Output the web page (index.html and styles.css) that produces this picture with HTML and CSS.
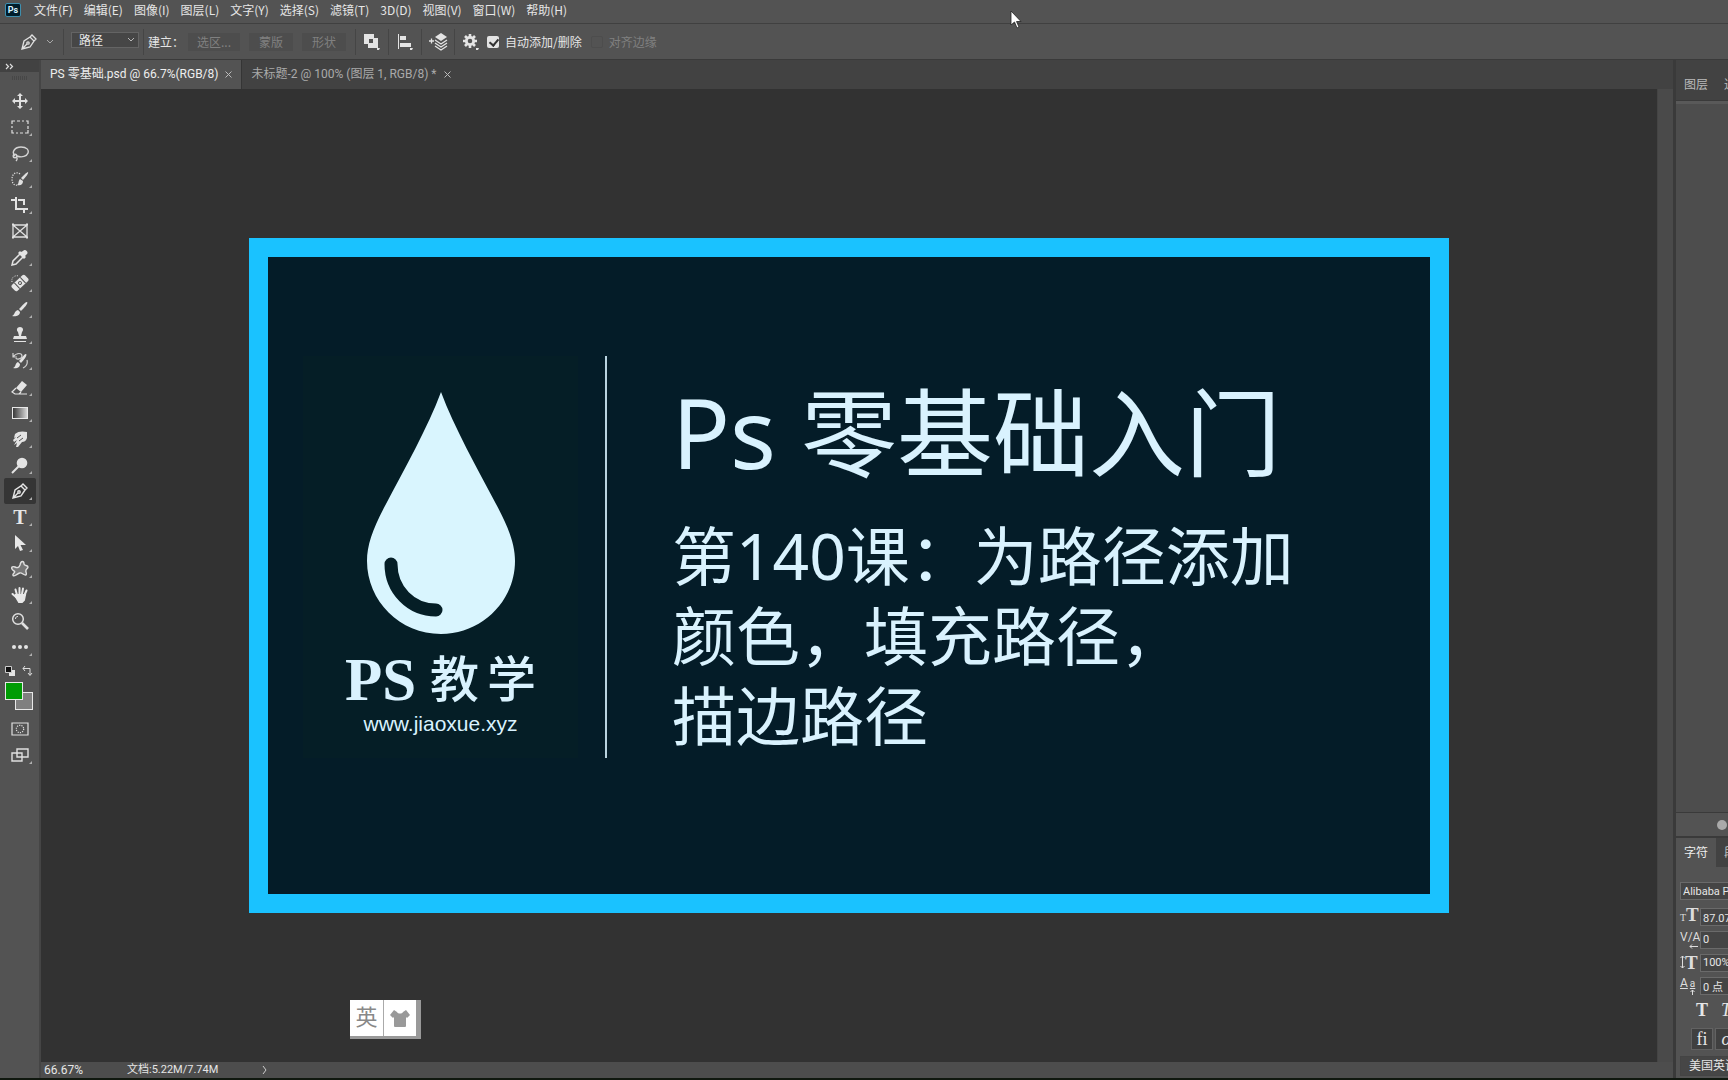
FILE: index.html
```html
<!DOCTYPE html>
<html lang="zh-CN">
<head>
  <meta charset="UTF-8">
  <meta name="viewport" content="width=device-width, initial-scale=1.0">
  <title>PS 零基础.psd</title>
  <link rel="stylesheet" href="styles.css">
</head>
<body>

  <nav class="menubar">
    <span class="app-logo">Ps</span>
    <button>文件(F)</button>
    <button>编辑(E)</button>
    <button>图像(I)</button>
    <button>图层(L)</button>
    <button>文字(Y)</button>
    <button>选择(S)</button>
    <button>滤镜(T)</button>
    <button>3D(D)</button>
    <button>视图(V)</button>
    <button>窗口(W)</button>
    <button>帮助(H)</button>
  </nav>

  <div class="options">
    <button class="preset" aria-label="钢笔工具预设">
      <svg width="18" height="18" viewBox="0 0 18 18" fill="none" stroke="#e0e0e0" stroke-width="1.3"><path d="M2 16l2-8 6-4 4 4-4 6z M2 16l5-5 M10 4l2-2 4 4-2 2"/><circle cx="8" cy="10" r="1.2"/></svg>
      <svg width="8" height="6" viewBox="0 0 8 6" fill="none" stroke="#a8a8a8"><path d="M1 1l3 3 3-3"/></svg>
    </button>
    <i class="sep"></i>
    <div class="mode">
      <select aria-label="工具模式"><option>路径</option><option>形状</option></select>
      <svg width="8" height="6" viewBox="0 0 8 6" fill="none" stroke="#b8b8b8"><path d="M1 1l3 3 3-3"/></svg>
    </div>
    <i class="sep"></i>
    <span class="label">建立：</span>
    <button class="make" disabled>选区...</button>
    <button class="make" disabled>蒙版</button>
    <button class="make" disabled>形状</button>
    <i class="sep"></i>
    <div class="path-ops">
      <button aria-label="路径操作"><svg width="18" height="18" viewBox="0 0 18 18"><path fill="#e4e4e4" fill-rule="evenodd" d="M1 1h10v4h4v10H5v-4H1z M6 6v4h4V6z"/><path fill="#e4e4e4" d="M14 15h3l-1 2h-2z"/></svg></button>
      <i class="sep"></i>
      <button aria-label="路径对齐"><svg width="18" height="18" viewBox="0 0 18 18" fill="#e4e4e4"><path d="M2 1h1v15H2z M4 3h6v4H4z M4 10h11v4H4z M14 15h3l-1 2h-2z"/></svg></button>
      <i class="sep"></i>
      <button aria-label="路径排列"><svg width="20" height="20" viewBox="0 0 20 20"><path fill="#e4e4e4" d="M7 5l6-4 6 4-6 4z"/><path fill="none" stroke="#e4e4e4" stroke-width="1.3" d="M7 8l6 4 6-4 M7 11l6 4 6-4 M7 14l6 4 6-4 M1 9h5 M3.500 6.500v5"/></svg></button>
      <i class="sep"></i>
      <button aria-label="设置"><svg width="18" height="18" viewBox="0 0 18 18"><circle cx="8" cy="8" r="3.700" fill="none" stroke="#e4e4e4" stroke-width="2.800"/><path stroke="#e4e4e4" stroke-width="2.600" d="M8 1v3 M8 12v3 M1 8h3 M12 8h3 M3 3l2 2 M11 11l2 2 M13 3l-2 2 M5 11l-2 2"/><path fill="#e4e4e4" d="M14 15h3l-1 2h-2z"/></svg></button>
    </div>
    <label class="check"><input type="checkbox" checked>自动添加/删除</label>
    <label class="check off"><input type="checkbox" disabled>对齐边缘</label>
  </div>

  <div class="workspace">
    <aside class="tools">
      <button class="expand" aria-label="展开面板"><svg width="9" height="7" viewBox="0 0 9 7" fill="none" stroke="#ddd" stroke-width="1.200"><path d="M1 1l2.500 2.500L1 6 M5 1l2.500 2.500L5 6"/></svg></button>
      <div class="grip"></div>
      <button class="tool more" aria-label="移动工具"><svg viewBox="0 0 18 18" fill="#e0e0e0"><path d="M9 1l3 3h-2v4h4V6l3 3-3 3v-2h-4v4h2l-3 3-3-3h2v-4H4v2L1 9l3-3v2h4V4H6z"/></svg></button>
      <button class="tool more" aria-label="矩形选框工具"><svg viewBox="0 0 18 18" fill="none" stroke="#e0e0e0" stroke-width="1.200"><path d="M1 6V3h3 M6 3h3 M11 3h2 M15 3h2v3 M17 8v3 M17 12v3h-3 M12 15H9 M7 15H5 M3 15H1v-3 M1 10V8"/></svg></button>
      <button class="tool more" aria-label="套索工具"><svg viewBox="0 0 18 18" fill="none" stroke="#d4d4d4" stroke-width="1.400"><path d="M4 12C0 8 4 3 10 3s8 3 7 6-6 5-11 3"/><circle cx="4" cy="12" r="1.800"/><path d="M5 13c2 1 1 3 0 4"/></svg></button>
      <button class="tool more" aria-label="快速选择工具"><svg viewBox="0 0 18 18"><path fill="none" stroke="#e0e0e0" stroke-width="1.200" stroke-dasharray="1.200 1.300" d="M9 4C5 1 1 4 1 9s3 7 6 6"/><path fill="#e0e0e0" d="M17 2c1 1-3 6-5 8l-2-2c2-2 6-6 7-6z M9 9l3 2c0 4-3 5-6 4 2-1 1-4 3-6z"/></svg></button>
      <button class="tool more" aria-label="裁剪工具"><svg viewBox="0 0 18 18" fill="none" stroke="#e4e4e4" stroke-width="2"><path d="M5 1v12h12 M0 4h4 M7 4h6v5 M13 12v5"/></svg></button>
      <button class="tool" aria-label="图框工具"><svg viewBox="0 0 18 18" fill="none" stroke="#e0e0e0" stroke-width="1.300"><path d="M2 3h14v12H2z M2 3l14 12 M16 3L2 15"/><path stroke-width="2" d="M1 2.500h2 M15 2.500h2 M1 15.500h2 M15 15.500h2"/></svg></button>
      <button class="tool more" aria-label="吸管工具"><svg viewBox="0 0 18 18"><path fill="#e4e4e4" d="M12 3c2-3 6 1 4 3l-2 2 1 1-2 2-6-6 2-2 1 1z"/><path fill="none" stroke="#e4e4e4" stroke-width="1.500" d="M9 6l-7 7-1 4 4-1 7-7"/></svg></button>
      <button class="tool more" aria-label="修复画笔工具"><svg viewBox="0 0 18 18"><g transform="rotate(-43 9 9)"><rect x="0" y="5" width="18" height="8" rx="2" fill="#e4e4e4"/><path stroke="#535353" d="M5 5v8 M13 5v8"/><circle cx="9" cy="9" r="2" fill="#535353"/><circle cx="9" cy="9" r="1" fill="#e4e4e4"/></g><path fill="none" stroke="#e0e0e0" stroke-dasharray="1 1.300" d="M1 8C0 3 4 1 8 2"/></svg></button>
      <button class="tool more" aria-label="画笔工具"><svg viewBox="0 0 18 18" fill="#e4e4e4"><path d="M16 2c2 1-4 7-6 9l-2-2c2-2 7-8 8-7z M7 10l2 2c0 4-5 5-8 4 3-1 2-5 6-6z"/></svg></button>
      <button class="tool more" aria-label="仿制图章工具"><svg viewBox="0 0 18 18" fill="#e4e4e4"><path d="M9 1c3 0 4 3 2 5l-1 4h5l1 3H2l1-3h5L7 6C5 4 6 1 9 1z M3 15h12v1H3z"/></svg></button>
      <button class="tool more" aria-label="历史记录画笔工具"><svg viewBox="0 0 18 18"><path fill="#e4e4e4" d="M15 2c2 1-3 7-5 9L8 9c2-2 6-8 7-7z M7 10l2 2c0 4-4 5-7 4 3-1 2-5 5-6z"/><path fill="none" stroke="#d0d0d0" stroke-width="1.200" d="M2 1v4h4 M2 5c4-5 9-4 9-1s-6 4-6 2 M16 8c1 4 0 6-4 8"/></svg></button>
      <button class="tool more" aria-label="橡皮擦工具"><svg viewBox="0 0 18 18"><path fill="#e4e4e4" d="M11 3l5 4-6 7-5-4z"/><path fill="none" stroke="#e4e4e4" stroke-width="1.200" d="M5 10l-4 4 3 2h4l2-2 M4 16h12"/></svg></button>
      <button class="tool more" aria-label="渐变工具"><svg viewBox="0 0 18 18"><defs><linearGradient id="grad"><stop offset="0" stop-color="#333"/><stop offset="1" stop-color="#ddd"/></linearGradient></defs><rect x="1.500" y="3.500" width="15" height="11" fill="url(#grad)" stroke="#e8e8e8"/></svg></button>
      <button class="tool more" aria-label="涂抹工具"><svg viewBox="0 0 18 18" fill="#e4e4e4"><path d="M4 4c3-3 8-3 12-2v6c-1 3-3 4-5 4l-4 5H5l1-4-3 2 3-5-3 2-1-2 3-3-2 1z"/><path d="M6 8l4-3 M8 11l4-3" stroke="#535353"/></svg></button>
      <button class="tool more" aria-label="减淡工具"><svg viewBox="0 0 18 18"><circle cx="11" cy="7" r="5.300" fill="#e4e4e4"/><path stroke="#e4e4e4" stroke-width="2" d="M8 10l-7 7"/></svg></button>
      <button class="tool more active" aria-label="钢笔工具"><svg viewBox="0 0 18 18" fill="none" stroke="#e4e4e4" stroke-width="1.400"><path d="M2 16l2-8 6-4 4 4-4 6z M2 16l5-5 M10 4l2-2 4 4-2 2"/><circle cx="8" cy="10" r="1.200"/></svg></button>
      <button class="tool more type" aria-label="文字工具">T</button>
      <button class="tool more" aria-label="路径选择工具"><svg viewBox="0 0 18 18" fill="#e8e8e8"><path d="M4 1l11 10H9.500l2.500 5-3 1-2-5-3 3z"/></svg></button>
      <button class="tool more" aria-label="自定形状工具"><svg viewBox="0 0 18 18" fill="#777" stroke="#e0e0e0" stroke-width="1.400"><path d="M9 5c1-5 4-4 4-1 0 2 4 1 4 3s-3 2-2 5 0 4-3 2-4-1-7 1-4 0-2-2-1-2-2-4 1-3 3-2 4 1 5-2z"/></svg></button>
      <button class="tool more" aria-label="抓手工具"><svg viewBox="0 0 18 18" fill="none" stroke="#e8e8e8" stroke-width="2" stroke-linecap="round"><path d="M6 9L4.500 3.500 M8.500 8V2 M11 8l1-5.500 M13.500 9l2-4.500 M5 11L1.500 8"/><path fill="#e8e8e8" d="M5 9h9l-1 5-2 2H8l-3-5z"/></svg></button>
      <button class="tool" aria-label="缩放工具"><svg viewBox="0 0 18 18" fill="none" stroke="#e0e0e0"><circle cx="7" cy="7" r="5.300" stroke-width="1.500"/><path d="M4.500 7c0-2 1-2.500 2.500-2.500"/><path stroke-width="2.600" d="M11 11l6 6"/></svg></button>
      <button class="tool more" aria-label="编辑工具栏"><svg viewBox="0 0 18 18" fill="#e4e4e4"><circle cx="3" cy="9" r="2"/><circle cx="9" cy="9" r="2"/><circle cx="15" cy="9" r="2"/></svg></button>
      <div class="color-mini">
        <button aria-label="默认颜色"><svg width="10" height="10" viewBox="0 0 10 10"><path fill="#e4e4e4" d="M4 4h6v6H4z"/><path fill="#111" stroke="#ccc" d="M.5.5h6v6h-6z"/></svg></button>
        <button aria-label="切换颜色"><svg width="11" height="10" viewBox="0 0 11 10" fill="none" stroke="#ddd"><path d="M3 0L1 2.500 3 5 M1 2.500h7V9 M6 7l2 2.500L10 7"/></svg></button>
      </div>
      <div class="swatches">
        <button class="swatch back" aria-label="背景色"></button>
        <button class="swatch front" aria-label="前景色"></button>
      </div>
      <button class="tool" aria-label="快速蒙版"><svg viewBox="0 0 18 18" fill="none" stroke="#e0e0e0" stroke-width="1.200"><path d="M1 3h16v12H1z"/><circle cx="9" cy="9" r="3.700" stroke-dasharray="1.200 1.100"/></svg></button>
      <button class="tool more" aria-label="屏幕模式"><svg viewBox="0 0 18 18" fill="#535353" stroke="#e0e0e0" stroke-width="1.400"><path d="M1 7h10v8H1z M6 3h11v8H6z"/></svg></button>
    </aside>

    <main class="document">
      <div class="tabs">
        <div class="tab current"><a href="#">PS 零基础.psd @ 66.7%(RGB/8)</a><button aria-label="关闭"><svg width="7" height="7" viewBox="0 0 7 7" stroke="#bbb"><path d="M.5.5l6 6 M6.500.5l-6 6"/></svg></button></div>
        <div class="tab"><a href="#">未标题-2 @ 100% (图层 1, RGB/8) *</a><button aria-label="关闭"><svg width="7" height="7" viewBox="0 0 7 7" stroke="#bbb"><path d="M.5.5l6 6 M6.500.5l-6 6"/></svg></button></div>
      </div>

      <div class="stage">
        <div class="canvas">
          <div class="artboard">
            <div class="brand">
              <svg class="drop" width="150" height="242" viewBox="0 0 150 242">
                <path fill="#d9f5fe" d="M75 0C88 35 111 76 130 112C143 136 149 153 149 169C149 209 116 242 75 242C34 242 1 209 1 169C1 153 7 136 20 112C39 76 62 35 75 0z"/>
                <path fill="none" stroke="#051e26" stroke-width="13" stroke-linecap="round" d="M25 172c0 26 20 46 45 46"/>
              </svg>
              <div class="brand-name"><b>PS</b><span>教</span><span>学</span></div>
              <div class="brand-url">www.jiaoxue.xyz</div>
            </div>
            <div class="rule"></div>
            <div class="lesson">
              <h1>Ps 零基础入门</h1>
              <p>第140课：为路径添加<br>颜色，填充路径，<br>描边路径</p>
            </div>
          </div>
          <div class="ime"><span>英</span><span><svg width="20" height="19" viewBox="0 0 20 19" fill="#999"><path d="M4 1l3 2c1 2 5 2 6 0l3-2 4 5-3 3-1-1v9q0 1-1 1H5q-1 0-1-1V8L3 9 0 6z"/></svg></span></div>
        </div>
        <div class="scroll-y"></div>
      </div>

      <footer class="status">
        <span class="zoom">66.67%</span>
        <span class="doc">文档:5.22M/7.74M</span>
        <button aria-label="状态选项"><svg width="5" height="10" viewBox="0 0 5 10" fill="none" stroke="#ccc"><path d="M1 1l3 4-3 4"/></svg></button>
      </footer>
    </main>

    <aside class="panels">
      <div class="panel-tabs"><button>图层</button><button>通道</button></div>
      <div class="layers"></div>
      <div class="layers-foot"><i class="dot"></i></div>
      <div class="panel-tabs char-tabs"><button class="current">字符</button><button>段落</button></div>
      <div class="character">
        <input class="font" aria-label="字体" value="Alibaba PuHuiTi">
        <label class="field"><span class="glyph"><small>T</small><b>T</b></span><input value="87.07 点"></label>
        <label class="field"><span class="glyph sans kern">V/A<svg width="9" height="5" viewBox="0 0 9 5" fill="none" stroke="#ddd"><path d="M9 2.500H1 M3 .5l-2 2 2 2"/></svg></span><input value="0"></label>
        <label class="field"><span class="glyph"><svg width="5" height="14" viewBox="0 0 5 14" fill="none" stroke="#ddd"><path d="M2.500 1v12 M.5 3l2-2 2 2 M.5 11l2 2 2-2"/></svg><b>T</b></span><input value="100%"></label>
        <label class="field"><span class="glyph sans"><u>A</u><span class="shift"><u>a</u><svg width="5" height="6" viewBox="0 0 5 6" fill="none" stroke="#ddd"><path d="M2.500 1v5 M.5 3l2-2 2 2"/></svg></span></span><input value="0 点"></label>
        <div class="styles"><button><b>T</b></button><button><i>T</i></button></div>
        <div class="ligatures"><button>fi</button><button><i>o</i></button></div>
        <select class="lang" aria-label="语言"><option>美国英语</option></select>
      </div>
    </aside>
  </div>

  <svg class="pointer" width="12" height="19" viewBox="0 0 12 19"><path fill="#fff" stroke="#222" stroke-width=".8" d="M1 1v14l3.500-3 2.500 6 2-1-2.500-5.500H11z"/></svg>

</body>
</html>
```

FILE: styles.css
```css
* {
  box-sizing: border-box;
}

body {
  margin: 0;
  height: 100vh;
  display: flex;
  flex-direction: column;
  overflow: hidden;
  background: #535353;
  border-bottom: 2px solid #10180f;
  color: #e6e6e6;
  font: 12px/16px Roboto, "Noto Sans CJK SC", sans-serif;
  white-space: nowrap;
}

button,
input,
select {
  margin: 0;
  padding: 0;
  border: 0;
  background: none;
  color: inherit;
  font: inherit;
}

button {
  display: flex;
  align-items: center;
  justify-content: center;
}

a {
  color: inherit;
  text-decoration: none;
}

/* menu bar */
.menubar {
  flex: none;
  height: 24px;
  padding: 0 5px 3px;
  display: flex;
  align-items: center;
  gap: 11px;
  border-bottom: 1px solid #404040;
}

.menubar button,
.options {
  font-family: "Noto Sans CJK SC", sans-serif;
}

.app-logo {
  width: 16px;
  height: 14px;
  margin-right: 2px;
  border: 1px solid #3f8fae;
  border-radius: 2px;
  background: #001d2b;
  color: #d8f3ff;
  font-size: 9px;
  font-weight: bold;
  line-height: 12px;
  text-align: center;
}

/* options bar */
.options {
  flex: none;
  height: 36px;
  padding: 0 20px;
  display: flex;
  align-items: center;
  border-bottom: 1px solid #3a3a3a;
}

.sep {
  width: 1px;
  height: 26px;
  background: #454545;
}

.preset {
  width: 43px;
  gap: 8px;
  justify-content: flex-start;
}

.mode {
  display: grid;
  align-items: center;
  width: 68px;
  height: 16px;
  margin: 0 4px 4px 7px;
  border: 1px solid #646464;
  background: #464646;
}

.mode select,
.mode svg {
  grid-area: 1 / 1;
}

.mode select {
  height: 14px;
  padding-left: 7px;
  line-height: 14px;
  appearance: none;
}

.mode svg {
  justify-self: end;
  margin-right: 3px;
  pointer-events: none;
}

.label {
  width: 40px;
  margin-left: 4px;
}

.make {
  width: 44px;
  height: 18px;
  margin-right: 9px;
  background: #4d4d4d;
  color: #808080;
}

.label + .make {
  width: 52px;
}

.path-ops {
  display: flex;
  align-items: center;
}

.path-ops button {
  width: 32px;
}

.check {
  display: flex;
  align-items: center;
  gap: 6px;
  margin-right: 9px;
}

.check input {
  appearance: none;
  width: 12px;
  height: 12px;
  border-radius: 2px;
}

.check input:checked {
  background: #e4e4e4;
}

.check input:checked::after {
  content: "";
  display: block;
  width: 4px;
  height: 7px;
  margin: 1px 4px;
  border: solid #333;
  border-width: 0 2px 2px 0;
  transform: rotate(40deg);
}

.check.off {
  color: #808080;
}

.check.off input {
  border: 1px solid #4d4d4d;
}

/* tools */
.workspace {
  flex: 1;
  min-height: 0;
  display: flex;
}

.tools {
  flex: none;
  width: 41px;
  border-right: 2px solid #454545;
}

.expand {
  width: 100%;
  height: 12px;
  padding-left: 5px;
  justify-content: flex-start;
  background: #424242;
}

.grip {
  width: 16px;
  height: 4px;
  margin: 4px auto 8px 12px;
  background: repeating-linear-gradient(90deg, #474747 0 1px, transparent 1px 2px);
}

.tool {
  position: relative;
  width: 32px;
  height: 26px;
  margin-left: 4px;
  border-radius: 2px;
}

.tool svg {
  width: 18px;
  height: 18px;
}

.tool.more::after {
  content: "";
  position: absolute;
  right: 4px;
  bottom: 4px;
  border-left: 3px solid transparent;
  border-bottom: 3px solid #b0b0b0;
}

.tool.active {
  background: #353535;
}

.type {
  font: bold 20px/20px "Liberation Serif", serif;
}

.color-mini {
  height: 18px;
  padding: 3px 6px 0 5px;
  display: flex;
  align-items: center;
  justify-content: space-between;
}

.swatches {
  display: grid;
  width: 28px;
  height: 28px;
  margin: 4px 0 6px 5px;
}

.swatch {
  grid-area: 1 / 1;
  width: 18px;
  height: 18px;
  border: 1px solid #e8e8e8;
}

.swatch.front {
  background: #009c05;
}

.swatch.back {
  place-self: end;
  background: #808080;
}

/* document */
.document {
  flex: 1;
  min-width: 0;
  display: flex;
  flex-direction: column;
}

.tabs {
  flex: none;
  height: 29px;
  display: flex;
  background: #424242;
}

.tab {
  display: flex;
  align-items: center;
  gap: 7px;
  padding: 0 9px 1px;
  color: #aaa;
}

.tab.current {
  background: #535353;
  border-right: 1px solid #353535;
  color: #eee;
}

.stage {
  flex: 1;
  min-height: 0;
  display: flex;
}

.canvas {
  position: relative;
  flex: 1;
  display: flex;
  align-items: center;
  justify-content: center;
  background: #323232;
}

.scroll-y {
  width: 16px;
  background: #4a4a4a;
  border-left: 1px solid #444;
}

.artboard {
  width: 1200px;
  max-width: 100%;
  aspect-ratio: 16 / 9;
  padding: 99px 35px 0;
  display: flex;
  align-items: flex-start;
  border: 19px solid #1ac2ff;
  background: #041c28;
  color: #d9f2fe;
}

.brand {
  width: 275px;
  height: 402px;
  padding-top: 36px;
  display: flex;
  flex-direction: column;
  align-items: center;
  background: #051e26;
}

.brand-name {
  display: flex;
  align-items: center;
  gap: 8px;
  height: 60px;
  margin-top: 16px;
  font: 500 49px/56px "Noto Sans CJK SC", sans-serif;
}

.brand-name span {
  padding-bottom: 8px;
}

.brand-name b {
  margin-right: 6px;
  font: bold 61px/60px "Liberation Serif", serif;
}

.brand-url {
  margin-top: 2px;
  font: 21px/24px "Liberation Sans", sans-serif;
}

.rule {
  width: 2px;
  height: 402px;
  margin: 0 65px 0 27px;
  background: #b9d3df;
}

.lesson {
  padding-top: 28px;
  font-family: "Noto Sans", "Noto Sans CJK SC", sans-serif;
}

.lesson h1 {
  margin: 0 0 36px;
  font-size: 96px;
  font-weight: 400;
  line-height: 96px;
}

.lesson p {
  margin: 0;
  font-size: 64px;
  line-height: 80px;
}

/* input method badge floating over the canvas */
.ime {
  position: absolute;
  left: 309px;
  bottom: 23px;
  display: flex;
  border: solid #999;
  border-width: 0 5px 3px 0;
  background: #fff;
  color: #888;
  font-size: 22px;
}

.ime span {
  width: 33px;
  height: 36px;
  display: flex;
  align-items: center;
  justify-content: center;
}

.ime span + span {
  border-left: 1px solid #aaa;
}

.status {
  flex: none;
  height: 16px;
  display: flex;
  align-items: center;
  background: #4d4d4d;
}

.zoom {
  width: 83px;
  padding-left: 3px;
}

.doc {
  width: 138px;
  padding-left: 3px;
  font-size: 11px;
}

/* right panels */
.panels {
  flex: none;
  width: 55px;
  display: flex;
  flex-direction: column;
  overflow: hidden;
  border-left: 3px solid #3a3a3a;
  background: #535353;
}

.panel-tabs {
  flex: none;
  height: 41px;
  padding-top: 10px;
  display: flex;
  background: #424242;
  border-bottom: 1px solid #3a3a3a;
  color: #bbb;
}

.panel-tabs button {
  flex: none;
  padding: 0 8px;
}

.layers {
  flex: 1;
  background: #4d4d4d;
  border-top: 3px solid #595959;
}

.layers-foot {
  height: 26px;
  padding-left: 41px;
  display: flex;
  align-items: center;
  border: solid #3a3a3a;
  border-width: 1px 0 2px;
}

.dot {
  width: 10px;
  height: 10px;
  border-radius: 50%;
  background: #aaa;
}

.char-tabs {
  height: 29px;
  padding: 0;
  border: 0;
}

.char-tabs .current {
  background: #535353;
  color: #eee;
}

.character {
  padding: 15px 0 2px 4px;
}

.character input {
  width: 100px;
  height: 18px;
  padding-left: 2px;
  border: 1px solid #6a6a6a;
  background: #454545;
  font-size: 11px;
}

.character .font {
  display: block;
  margin-bottom: 5px;
}

.field {
  display: flex;
  align-items: center;
  height: 23px;
}

.glyph {
  flex: none;
  width: 20px;
  display: flex;
  align-items: baseline;
  color: #ddd;
  font: 19px/18px "Liberation Serif", serif;
}

.glyph small {
  font-size: 10px;
}

.glyph.sans {
  font: 12px/13px Roboto, sans-serif;
}

.glyph.kern {
  flex-direction: column;
  align-items: flex-start;
}

.kern svg {
  margin-left: 9px;
}

.shift {
  display: flex;
  flex-direction: column;
  align-items: center;
  margin-left: 2px;
  font-size: 10px;
  line-height: 10px;
}

.styles,
.ligatures {
  display: flex;
  gap: 2px;
  padding-left: 11px;
  font: 18px/22px "Liberation Serif", serif;
}

.styles {
  padding-top: 2px;
}

.styles button,
.ligatures button {
  flex: none;
  width: 22px;
  height: 22px;
}

.ligatures {
  padding-top: 7px;
}

.ligatures button {
  border: 1px solid #626262;
  background: #404040;
}

.lang {
  width: 100px;
  height: 20px;
  margin-top: 6px;
  padding-left: 8px;
  border: 1px solid #444;
  background: #464646;
  appearance: none;
}

.pointer {
  position: absolute;
  left: 1010px;
  top: 10px;
}
```
